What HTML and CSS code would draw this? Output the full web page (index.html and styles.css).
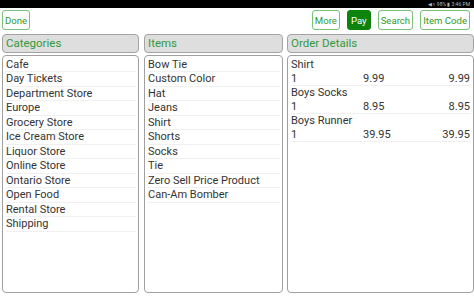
FILE: index.html
```html
<!DOCTYPE html>
<html lang="en">
<head>
  <meta charset="UTF-8">
  <title>Register</title>
  <link rel="stylesheet" href="styles.css">
</head>
<body>
  <div class="status">&#9664; &#8776; 98% &#9646; 3:46 PM</div>

  <div class="toolbar">
    <button class="btn">Done</button>
    <div class="toolbar-right">
      <button class="btn">More</button>
      <button class="btn btn-pay">Pay</button>
      <button class="btn">Search</button>
      <button class="btn">Item Code</button>
    </div>
  </div>

  <div class="panels">
    <!-- categories -->
    <div class="panel">
      <div class="panel-head">Categories</div>
      <ul class="list">
        <li>Cafe</li>
        <li>Day Tickets</li>
        <li>Department Store</li>
        <li>Europe</li>
        <li>Grocery Store</li>
        <li>Ice Cream Store</li>
        <li>Liquor Store</li>
        <li>Online Store</li>
        <li>Ontario Store</li>
        <li>Open Food</li>
        <li>Rental Store</li>
        <li>Shipping</li>
      </ul>
    </div>

    <!-- items -->
    <div class="panel">
      <div class="panel-head">Items</div>
      <ul class="list">
        <li>Bow Tie</li>
        <li>Custom Color</li>
        <li>Hat</li>
        <li>Jeans</li>
        <li>Shirt</li>
        <li>Shorts</li>
        <li>Socks</li>
        <li>Tie</li>
        <li>Zero Sell Price Product</li>
        <li>Can-Am Bomber</li>
      </ul>
    </div>

    <!-- order -->
    <div class="panel">
      <div class="panel-head">Order Details</div>
      <div class="list order">
        <div class="order-line">
          <div class="order-name">Shirt</div>
          <div class="order-nums"><span>1</span><span>9.99</span><span class="total">9.99</span></div>
        </div>
        <div class="order-line">
          <div class="order-name">Boys Socks</div>
          <div class="order-nums"><span>1</span><span>8.95</span><span class="total">8.95</span></div>
        </div>
        <div class="order-line">
          <div class="order-name">Boys Runner</div>
          <div class="order-nums"><span>1</span><span>39.95</span><span class="total">39.95</span></div>
        </div>
      </div>
    </div>
  </div>
</body>
</html>
```

FILE: styles.css
```css
/* base */
html, body {
  margin: 0;
  padding: 0;
  height: 100%;
  background: #fff;
  font-family: Roboto, "Liberation Sans", sans-serif;
  overflow: hidden;
}

/* android status bar */
.status {
  height: 8px;
  background: #000;
  color: #bbb;
  font-size: 5px;
  line-height: 8px;
  text-align: right;
  padding-right: 4px;
}

/* top buttons */
.toolbar {
  display: flex;
  justify-content: space-between;
  padding: 2px 4px 0 2px;
  height: 22px;
}
.toolbar-right {
  display: flex;
  gap: 7px;
}
.btn {
  height: 20px;
  padding: 0 2px;
  font-family: inherit;
  font-size: 9.6px;
  color: #2f9a2f;
  background: #fff;
  border: 1px solid #77c077;
  border-radius: 3px;
}
.btn-pay {
  padding: 0 3px;
  background: #0d820d;
  border-color: #0d820d;
  color: #fff;
}

/* columns */
.panels {
  display: grid;
  grid-template-columns: 137px 139px 186px;
  column-gap: 5px;
  padding: 2px 1px 0 2px;
  height: 259px;
}
.panels .panel:last-child { margin-left: -1px; }
.panel {
  display: flex;
  flex-direction: column;
  gap: 2px;
  min-width: 0;
}
.panel-head {
  height: 17px;
  line-height: 17px;
  padding-left: 3px;
  background: #dedede;
  border: 1px solid #a3a3a3;
  border-radius: 4px;
  color: #33993a;
  font-size: 11.5px;
}
.list {
  flex: 1;
  margin: 0;
  padding: 1.5px 2px 0 3px;
  list-style: none;
  background: #fff;
  border: 1px solid #a0a0a0;
  border-radius: 4px;
}
.list li {
  height: 14.5px;
  line-height: 14.5px;
  font-size: 11px;
  color: #333;
  border-bottom: 1px solid #f0f0f0;
  box-sizing: border-box;
  white-space: nowrap;
}

/* order details */
.order-line {
  height: 28px;
  box-sizing: border-box;
  font-size: 11px;
  color: #333;
  line-height: 14px;
  border-bottom: 1px solid #f0f0f0;
}
.order-nums {
  display: grid;
  grid-template-columns: 72px 1fr auto;
  padding-right: 1px;
}
.total { text-align: right; }
```
